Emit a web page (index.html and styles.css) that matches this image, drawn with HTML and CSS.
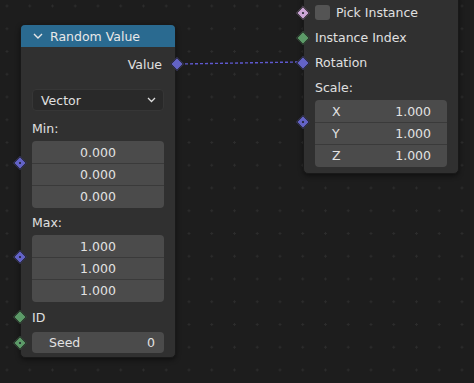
FILE: index.html
```html
<!DOCTYPE html>
<html lang="en">
<head>
    <meta charset="UTF-8">
    <meta name="viewport" content="width=device-width, initial-scale=1.0">
    <title>Node Editor</title>
    <link rel="stylesheet" href="styles.css">
</head>
<body>
    <div class="canvas">
        <svg class="links" width="474" height="383">
            <line x1="180" y1="64" x2="299" y2="62" stroke="#5f59cf" stroke-width="1.4" stroke-dasharray="3 2"/>
        </svg>

        <div class="node random-value">
            <div class="node-header">
                <svg class="chevron" width="10" height="6" viewBox="0 0 10 6"><path d="M1 1 L5 5 L9 1" fill="none" stroke="#e6e6e6" stroke-width="1.4"/></svg>
                Random Value
            </div>
            <div class="node-body">
                <div class="row output">Value <span class="socket vector out"></span></div>

                <div class="dropdown">
                    <span>Vector</span>
                    <svg width="9" height="6" viewBox="0 0 9 6"><path d="M1 1 L4.5 4.5 L8 1" fill="none" stroke="#ddd" stroke-width="1.3"/></svg>
                </div>

                <div class="row label min-label">Min:</div>
                <div class="fields">
                    <span class="socket vector dot in"></span>
                    <div class="field">0.000</div>
                    <div class="field">0.000</div>
                    <div class="field">0.000</div>
                </div>

                <div class="row label">Max:</div>
                <div class="fields">
                    <span class="socket vector dot in"></span>
                    <div class="field">1.000</div>
                    <div class="field">1.000</div>
                    <div class="field">1.000</div>
                </div>

                <div class="row label id-row"><span class="socket integer in"></span>ID</div>
                <div class="fields seed">
                    <span class="socket integer dot in"></span>
                    <div class="field split"><span>Seed</span><span>0</span></div>
                </div>
            </div>
        </div>

        <div class="node instance">
            <div class="node-body">
                <div class="row input"><span class="socket boolean dot in"></span><span class="checkbox"></span>Pick Instance</div>
                <div class="row input"><span class="socket integer in"></span>Instance Index</div>
                <div class="row input"><span class="socket vector in"></span>Rotation</div>
                <div class="row input">Scale:</div>
                <div class="fields scale">
                    <span class="socket vector dot in"></span>
                    <div class="field split xyz"><span>X</span><span>1.000</span></div>
                    <div class="field split xyz"><span>Y</span><span>1.000</span></div>
                    <div class="field split xyz"><span>Z</span><span>1.000</span></div>
                </div>
            </div>
        </div>
    </div>
</body>
</html>
```

FILE: styles.css
```css
body {
    margin: 0;
    background-color: #1d1d1d;
    font-family: "DejaVu Sans", sans-serif;
    font-size: 12.5px;
    color: #e0e0e0;
    overflow: hidden;
}
* {
    box-sizing: border-box;
}
.canvas {
    position: relative;
    width: 474px;
    height: 383px;
    background-image: radial-gradient(circle, #2c2c2c 1px, transparent 1.3px);
    background-size: 22.75px 22.75px;
    background-position: -4.4px -5.4px;
}
.links {
    position: absolute;
    left: 0;
    top: 0;
}
.node {
    position: absolute;
    width: 156px;
    background: #303030;
    border: 1px solid #191919;
    border-radius: 5px;
    box-shadow: 0 2px 5px rgba(0, 0, 0, 0.45);
}
.random-value {
    left: 20px;
    top: 24px;
    height: 334px;
}
.instance {
    left: 303px;
    top: -8px;
    padding-bottom: 6px;
}
.node-header {
    height: 22px;
    background: #2a6a90;
    border-radius: 4px 4px 0 0;
    display: flex;
    align-items: center;
    padding-left: 12px;
    color: #e8e8e8;
}
.chevron {
    margin-right: 7px;
}
.random-value .node-body {
    padding: 6px 11px 0 11px;
}
.instance .node-body {
    padding: 7px 11px 0 11px;
}
.row {
    position: relative;
    height: 22px;
    display: flex;
    align-items: center;
}
.output {
    justify-content: flex-end;
    padding-right: 2px;
}
.instance .row {
    height: 25px;
}
.label {
    margin-top: 3px;
}
.min-label {
    margin-top: 6px;
}
.id-row {
    margin-top: 4px;
}
.dropdown {
    margin-top: 14px;
    height: 22px;
    background: #292929;
    border: 1px solid #363636;
    border-radius: 4px;
    display: flex;
    align-items: center;
    justify-content: space-between;
    padding: 0 7px 0 8px;
}
.fields {
    position: relative;
    margin-top: 2px;
    padding-bottom: 1px;
    border-radius: 4px;
    background: #4b4b4b;
}
.field {
    height: 22px;
    display: flex;
    align-items: center;
    justify-content: center;
    color: #e2e2e2;
    border-top: 1px solid #3a3a3a;
}
.field:first-of-type {
    border-top: none;
}
.split {
    justify-content: space-between;
    padding: 0 9px 0 17px;
}
.xyz {
    padding: 0 16px 0 17px;
}
.seed {
    margin-top: 4px;
    padding-bottom: 0;
}
.seed .field {
    height: 21px;
}
.scale {
    margin-top: 0;
}
.checkbox {
    width: 15px;
    height: 15px;
    background: #545454;
    border-radius: 3px;
    margin-right: 6px;
}

/* sockets sit on the node border */
.socket {
    position: absolute;
    width: 10px;
    height: 10px;
    transform: rotate(45deg);
    border: 1px solid #1e1e1e;
}
.socket.in {
    left: -17px;
    top: 50%;
    margin-top: -5px;
}
.socket.out {
    right: -18px;
    top: 50%;
    margin-top: -5px;
}
.fields .socket.in {
    top: 22px;
}
.seed .socket.in {
    top: 50%;
}
.socket.dot::after {
    content: "";
    position: absolute;
    left: 3px;
    top: 3px;
    width: 2px;
    height: 2px;
    background: #1e1e2a;
    border-radius: 50%;
}
.vector {
    background: #6363c7;
}
.integer {
    background: #5c9a68;
}
.boolean {
    background: #cca6d6;
}
```
